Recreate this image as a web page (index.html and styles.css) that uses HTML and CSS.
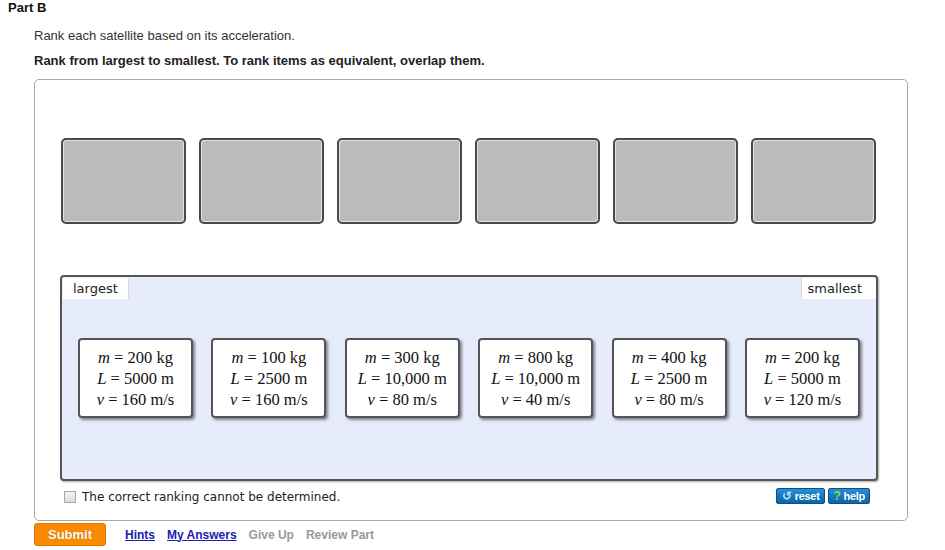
FILE: index.html
```html
<!DOCTYPE html>
<html lang="en">
  <head>
    <meta charset="UTF-8" />
    <title>Part B</title>
    <link rel="stylesheet" href="styles.css">
  </head>
  <body>
    <h3 class="part-title">Part B</h3>

    <div class="part-body">
      <p class="prompt">Rank each satellite based on its acceleration.</p>
      <p class="prompt strong">Rank from largest to smallest. To rank items as equivalent, overlap them.</p>

      <div class="ranking-box">
        <div class="slots">
          <div class="slot"></div>
          <div class="slot"></div>
          <div class="slot"></div>
          <div class="slot"></div>
          <div class="slot"></div>
          <div class="slot"></div>
        </div>

        <div class="pool">
          <span class="pool-label left">largest</span>
          <span class="pool-label right">smallest</span>

          <div class="card">
            <div><i>m</i> = 200 kg</div>
            <div><i>L</i> = 5000 m</div>
            <div><i>v</i> = 160 m/s</div>
          </div>
          <div class="card">
            <div><i>m</i> = 100 kg</div>
            <div><i>L</i> = 2500 m</div>
            <div><i>v</i> = 160 m/s</div>
          </div>
          <div class="card">
            <div><i>m</i> = 300 kg</div>
            <div><i>L</i> = 10,000 m</div>
            <div><i>v</i> = 80 m/s</div>
          </div>
          <div class="card">
            <div><i>m</i> = 800 kg</div>
            <div><i>L</i> = 10,000 m</div>
            <div><i>v</i> = 40 m/s</div>
          </div>
          <div class="card">
            <div><i>m</i> = 400 kg</div>
            <div><i>L</i> = 2500 m</div>
            <div><i>v</i> = 80 m/s</div>
          </div>
          <div class="card">
            <div><i>m</i> = 200 kg</div>
            <div><i>L</i> = 5000 m</div>
            <div><i>v</i> = 120 m/s</div>
          </div>
        </div>

        <div class="box-footer">
          <label class="undetermined">
            <span class="checkbox"></span>
            The correct ranking cannot be determined.
          </label>
          <div class="tools">
            <span class="tool-btn"><span class="reset-icon">&#x21BA;</span>reset</span>
            <span class="tool-btn"><span class="help-icon">?</span>help</span>
          </div>
        </div>
      </div>

      <div class="actions">
        <button class="submit">Submit</button>
        <a class="action-link" href="#">Hints</a>
        <a class="action-link" href="#">My Answers</a>
        <span class="action-link disabled">Give Up</span>
        <span class="action-link disabled">Review Part</span>
      </div>
    </div>
  </body>
</html>
```

FILE: styles.css
```css
:root {
  --slot-gray: #bbbbbb;
  --dark-border: #4a4a4a;
  --pool-blue: #e6ecfc;
  --link-blue: #2020b0;
  --muted: #999999;
  --orange: #fb8a00;
}

* {
  box-sizing: border-box;
}

body {
  margin: 0 8px;
  font-family: "Liberation Sans", Arial, sans-serif;
  color: #222222;
  background: #ffffff;
}

.part-title {
  margin: 0;
  font-size: 13px;
  line-height: 16px;
  font-weight: bold;
  color: #111111;
}

.part-body {
  padding-left: 26px;
}

.prompt {
  margin: 12px 0 0 0;
  font-size: 13px;
  line-height: 16px;
  color: #333333;
}

.prompt.strong {
  margin-top: 9px;
  font-weight: bold;
  color: #222222;
}

.ranking-box {
  margin-top: 10px;
  width: 874px;
  border: 1px solid #aaaaaa;
  border-radius: 5px;
  padding: 58px 29px 15px 25px;
}

.slots {
  display: flex;
  gap: 13px;
  margin: 0 2px 0 1px;
}

.slot {
  width: 125px;
  height: 86px;
  background: var(--slot-gray);
  border: 2px solid var(--dark-border);
  border-radius: 5px;
  box-shadow: inset 1px 1px 0 #e2e2e2, inset -1px -1px 0 #e2e2e2;
}

.pool {
  position: relative;
  margin-top: 51px;
  height: 206px;
  background: var(--pool-blue);
  border: 2px solid #555555;
  border-radius: 4px;
  box-shadow: 1px 1px 2px rgba(0, 0, 0, 0.35);
  display: flex;
  align-items: center;
  justify-content: space-between;
  padding: 0 16px;
}

.pool-label {
  position: absolute;
  top: 1px;
  height: 21px;
  background: #ffffff;
  font-family: "DejaVu Sans", Verdana, sans-serif;
  font-size: 13px;
  line-height: 21px;
  color: #222222;
}

.pool-label.left {
  left: 1px;
  padding: 0 10px 0 10px;
  border-right: 1px solid #d8d8d8;
}

.pool-label.right {
  right: 0;
  padding: 0 14px 0 6px;
  border-left: 1px solid #d8d8d8;
}

.card {
  width: 115px;
  height: 80px;
  background: #ffffff;
  border: 2px solid #555555;
  border-radius: 4px;
  box-shadow: 2px 2px 3px rgba(0, 0, 0, 0.45);
  display: flex;
  flex-direction: column;
  justify-content: center;
  text-align: center;
  font-family: "Liberation Serif", "Times New Roman", serif;
  font-size: 16.5px;
  line-height: 21px;
  color: #111111;
}

.box-footer {
  display: flex;
  align-items: center;
  justify-content: space-between;
  margin-top: 6px;
  padding: 0 8px 0 4px;
  height: 18px;
}

.undetermined {
  display: flex;
  align-items: center;
  gap: 6px;
  font-family: "DejaVu Sans", Verdana, sans-serif;
  font-size: 12px;
  color: #222222;
  padding-top: 2px;
}

.checkbox {
  width: 12px;
  height: 12px;
  border: 1px solid #a8a8a8;
  background: linear-gradient(#f4f4f4, #dcdcdc);
}

.tools {
  display: flex;
  gap: 3px;
}

.tool-btn {
  display: flex;
  align-items: center;
  gap: 3px;
  height: 16px;
  padding: 0 4px 0 5px;
  background: linear-gradient(#2a8fd6, #0a64a8);
  border: 1px solid #0b4f86;
  border-radius: 2px;
  color: #ffffff;
  font-size: 11px;
  font-weight: bold;
  letter-spacing: -0.3px;
}

.reset-icon {
  font-family: "DejaVu Sans", sans-serif;
  font-size: 12px;
  color: #bfe4ff;
}

.help-icon {
  color: #7ddc4f;
  font-size: 12px;
}

.actions {
  display: flex;
  align-items: center;
  margin-top: 2px;
}

.submit {
  width: 72px;
  height: 23px;
  margin-right: 19px;
  background: var(--orange);
  border: 1px solid #e07a00;
  border-radius: 3px;
  color: #ffffff;
  font-family: "Liberation Sans", Arial, sans-serif;
  font-size: 13px;
  font-weight: bold;
  text-shadow: 0 0 1px rgba(120, 60, 0, 0.6);
  padding: 0;
}

.action-link {
  margin-right: 12px;
  font-size: 12px;
  font-weight: bold;
  color: var(--link-blue);
}

.action-link.disabled {
  color: var(--muted);
  text-decoration: none;
}
```
